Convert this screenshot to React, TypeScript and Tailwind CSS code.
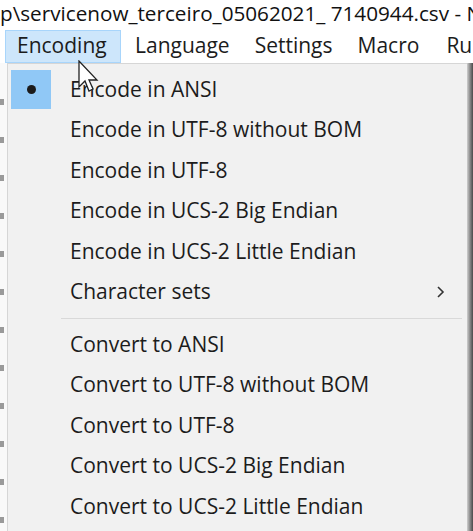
const font = "font-['Segoe_UI','Open_Sans','Noto_Sans',sans-serif]"

const encodeItems = [
  "Encode in ANSI",
  "Encode in UTF-8 without BOM",
  "Encode in UTF-8",
  "Encode in UCS-2 Big Endian",
  "Encode in UCS-2 Little Endian",
]

const convertItems = [
  "Convert to ANSI",
  "Convert to UTF-8 without BOM",
  "Convert to UTF-8",
  "Convert to UCS-2 Big Endian",
  "Convert to UCS-2 Little Endian",
]

const MenuRow = ({ label, checked, sub }: { label: string; checked?: boolean; sub?: boolean }) => (
  <div className="flex h-[40.5px] items-center">
    <div className="ml-[3px] flex h-[39px] w-[40px] items-center justify-center">
      {checked && (
        <div className="flex h-full w-full items-center justify-center bg-[#90c8f6]">
          <div className="h-[9px] w-[9px] rounded-full bg-[#1b1b1b]" />
        </div>
      )}
    </div>
    <span className="ml-[19px] flex-1 text-[#1c1c1c]">{label}</span>
    {sub && (
      <svg width="10" height="14" viewBox="0 0 10 14" className="mr-[21px]">
        <path d="M2 2 L7 7 L2 12" fill="none" stroke="#333" strokeWidth="1.6" />
      </svg>
    )}
  </div>
)

export default function App() {
  return (
    <div className={`relative h-[531px] w-[473px] overflow-hidden bg-white text-[21px] ${font}`}>
      {/* title, clipped at the window edge like the screenshot */}
      <div className="h-[29px] overflow-hidden whitespace-nowrap text-[20.7px] leading-[26px] text-[#111]">
        p\servicenow_terceiro_05062021_ 7140944.csv - N
      </div>

      {/* menu bar */}
      <div className="flex h-[34px] items-center whitespace-nowrap text-[#1c1c1c]">
        <div className="ml-[5px] flex h-[33px] w-[116px] items-center border border-[#a8d5fb] bg-[#cde6fb] pl-[11px]">
          Encoding
        </div>
        <div className="ml-[14px]">Language</div>
        <div className="ml-[25px]">Settings</div>
        <div className="ml-[25px]">Macro</div>
        <div className="ml-[27px]">Ru</div>
      </div>

      {/* editor + dropdown */}
      <div className="flex h-[468px]">
        <div className="flex w-[7px] flex-col gap-[32px] bg-[#f9f9f9] pt-[36px]">
          {Array.from({ length: 12 }).map((_, i) => (
            <div key={i} className="h-[6px] w-[4px] bg-[#9a9a9a]" />
          ))}
        </div>
        <div className="flex-1 border-l border-t border-[#d6d6d6] bg-[#f1f1f1] pt-[5px]">
          {encodeItems.map((t, i) => (
            <MenuRow key={t} label={t} checked={i === 0} />
          ))}
          <MenuRow label="Character sets" sub />
          <div className="flex h-[12px] items-center pl-[53px] pr-[5px]">
            <div className="h-[1px] w-full bg-[#d9d9d9]" />
          </div>
          {convertItems.map((t) => (
            <MenuRow key={t} label={t} />
          ))}
        </div>
        <div className="w-[6px] bg-gradient-to-r from-[#d0d0d0] to-[#4a4a4a]" />
      </div>

      {/* mouse cursor */}
      <svg className="absolute left-[78px] top-[60px]" width="24" height="36" viewBox="0 0 24 36">
        <path d="M1 1 L1 27 L7 21 L11 31 L15 29 L11 20 L19 20 Z" fill="#fff" stroke="#222" strokeWidth="1.3" />
      </svg>
    </div>
  )
}
